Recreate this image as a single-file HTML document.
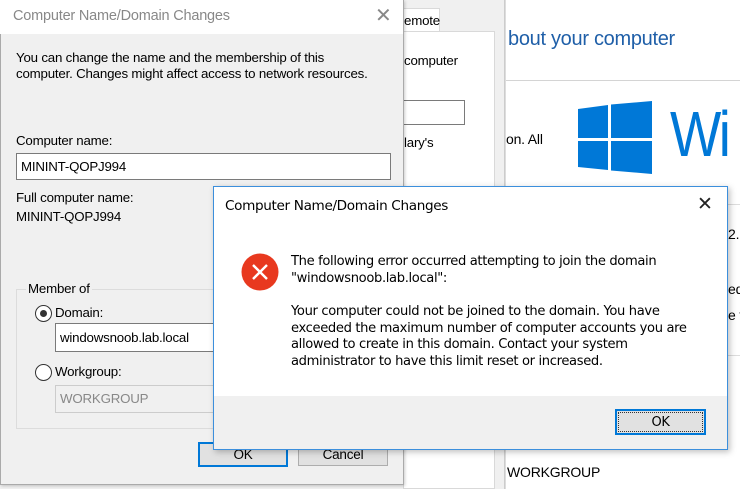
<!DOCTYPE html>
<html><head><meta charset="utf-8"><style>
*{margin:0;padding:0;box-sizing:border-box}
body{width:740px;height:489px;overflow:hidden;background:#f0f0f0;position:relative;font-family:"Liberation Sans",sans-serif;font-size:13.3px;color:#000;letter-spacing:-0.2px}
.a{position:absolute;white-space:nowrap}
.inp{position:absolute;background:#fff;border:1px solid #7a7a7a;padding:3px 4px;font-size:13.3px}
.radio{position:absolute;width:17px;height:17px;border:1px solid #333;border-radius:50%;background:#fff}
.btn{position:absolute;background:#e1e1e1;border:1px solid #adadad;text-align:center;font-size:13.5px}
.t{font-family:"DejaVu Sans",sans-serif;font-size:13.1px;letter-spacing:-0.35px;color:#000}
</style></head><body>
<div class="a" style="left:505px;top:0;width:235px;height:489px;background:#fff;border-left:1px solid #ddd;box-shadow:-2px 0 4px rgba(0,0,0,.15)"></div>
<div class="a" style="left:508px;top:28px;font-size:20px;color:#1f5fa8;letter-spacing:-0.3px">bout your computer</div>
<div class="a" style="left:506px;top:80px;width:234px;height:1px;background:#d4d4d4"></div>
<div class="a" style="left:506px;top:131px;font-size:14px">on. All</div>
<svg class="a" style="left:578px;top:101px" width="75" height="73" viewBox="0 0 75 73">
<polygon points="0,8 30,4 30,37 0,37" fill="#0078d7"/><polygon points="33,3.5 74,0 74,37 33,37" fill="#0078d7"/>
<polygon points="0,40 30,40 30,69 0,66" fill="#0078d7"/><polygon points="33,40 74,40 74,73 33,69.5" fill="#0078d7"/></svg>
<div class="a" style="left:670px;top:97px;font-size:64px;color:#0078d7;letter-spacing:-3px;transform:scaleX(0.85);transform-origin:left">Wi</div>
<div class="a" style="left:728px;top:204px;width:12px;height:1px;background:#ddd"></div>
<div class="a" style="left:728px;top:226px;font-size:14px">2.</div>
<div class="a" style="left:728px;top:281px;font-size:14px">ed</div>
<div class="a" style="left:728px;top:307px;font-size:14px">e f</div>
<div class="a" style="left:728px;top:355px;width:12px;height:1px;background:#ddd"></div>
<div class="a" style="left:507px;top:464px;font-size:14px">WORKGROUP</div>
<div class="a" style="left:403px;top:0;width:102px;height:489px;background:#f0f0f0;border-right:1px solid #ccc"></div>
<div class="a" style="left:403px;top:8px;width:37px;height:24px;background:#fff;border:1px solid #d9d9d9;padding:4px 0 0 0">emote</div>
<div class="a" style="left:403px;top:31px;width:92px;height:458px;background:#fff;border:1px solid #d9d9d9"></div>
<div class="a" style="left:404px;top:53px">computer</div>
<div class="a" style="left:403px;top:100px;width:62px;height:25px;border:1px solid #7a7a7a;background:#fff"></div>
<div class="a" style="left:404px;top:135px">lary's</div>
<div class="a" style="left:0;top:0;width:404px;height:485px;background:#f0f0f0;border:1px solid #aaa;border-top:none;box-shadow:1px 1px 3px rgba(0,0,0,.2)"></div>
<div class="a" style="left:0;top:0;width:403px;height:34px;background:#fff"></div>
<div class="a" style="left:13px;top:8px;font-size:14.5px;color:#888">Computer Name/Domain Changes</div>
<div class="a" style="left:375px;top:3px;font-size:20px;color:#888">✕</div>
<div class="a" style="left:16px;top:50px;line-height:16px">You can change the name and the membership of this<br>computer. Changes might affect access to network resources.</div>
<div class="a" style="left:16px;top:133px">Computer name:</div>
<div class="inp" style="left:16px;top:153px;width:375px;height:27px;padding-top:5px">MININT-QOPJ994</div>
<div class="a" style="left:16px;top:190px">Full computer name:</div>
<div class="a" style="left:16px;top:209px">MININT-QOPJ994</div>
<div class="a" style="left:16px;top:289px;width:220px;height:140px;border:1px solid #dcdcdc"></div>
<div class="a" style="left:26px;top:281px;background:#f0f0f0;padding:0 2px">Member of</div>
<div class="radio" style="left:35px;top:305px"><div style="position:absolute;left:4px;top:4px;width:7px;height:7px;border-radius:50%;background:#333"></div></div>
<div class="a" style="left:55px;top:305px">Domain:</div>
<div class="inp" style="left:55px;top:323px;width:170px;height:29px;padding-top:6px">windowsnoob.lab.local</div>
<div class="radio" style="left:35px;top:364px"></div>
<div class="a" style="left:55px;top:364px">Workgroup:</div>
<div class="inp" style="left:55px;top:385px;width:170px;height:28px;padding-top:5px;background:#f0f0f0;border-color:#ccc;color:#888">WORKGROUP</div>
<div class="btn" style="left:198px;top:442px;width:90px;height:25px;border:2px solid #0078d7;padding-top:3px">OK</div>
<div class="btn" style="left:298px;top:443px;width:90px;height:23px;padding-top:3px">Cancel</div>
<div class="a" style="left:213px;top:186px;width:515px;height:264px;background:#fff;border:1px solid #3c8fdc;box-shadow:2px 2px 6px rgba(0,0,0,.25)"></div>
<div class="a" style="left:214px;top:396px;width:513px;height:53px;background:#f0f0f0"></div>
<div class="a t" style="left:225px;top:198px;font-size:13.6px">Computer Name/Domain Changes</div>
<div class="a" style="left:697px;top:193px;font-size:19px;color:#222">✕</div>
<svg class="a" style="left:241px;top:253px" width="38" height="38" viewBox="0 0 38 38"><circle cx="19" cy="19" r="18.5" fill="#e8391f"/><path d="M12 12L26 26M26 12L12 26" stroke="#fff" stroke-width="2.4"/></svg>
<div class="a t" style="left:291px;top:254px;line-height:16.5px">The following error occurred attempting to join the domain<br>"windowsnoob.lab.local":</div>
<div class="a t" style="left:291px;top:304px;line-height:16.5px">Your computer could not be joined to the domain. You have<br>exceeded the maximum number of computer accounts you are<br>allowed to create in this domain. Contact your system<br>administrator to have this limit reset or increased.</div>
<div class="btn t" style="left:615px;top:409px;width:91px;height:26px;border:2px solid #0078d7;padding-top:4px;font-size:13px"><div style="position:absolute;left:1px;top:1px;right:1px;bottom:1px;border:1px dotted #333"></div>OK</div>
</body></html>
